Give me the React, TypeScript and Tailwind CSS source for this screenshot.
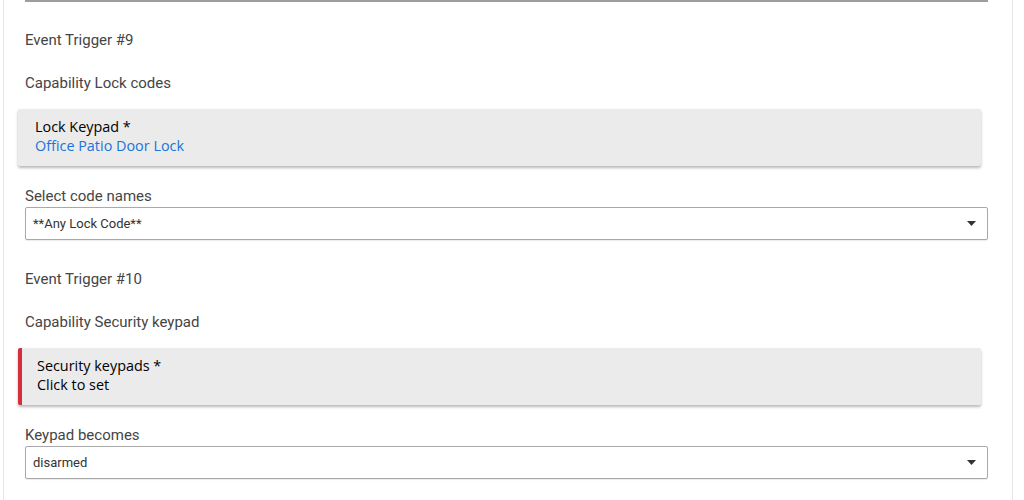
import React from 'react';

const labelCls = "text-[15px] leading-5 text-[#454545]";

const Caret = () => (
    <svg width="9" height="5" viewBox="0 0 9 5" className="shrink-0">
        <path d="M0 0 L9 0 L4.5 5 Z" fill="#333" />
    </svg>
);

const SelectBox: React.FC<{ value: string }> = ({ value }) => (
    <div className="h-[33px] border border-[#a9a9a9] rounded-[2px] bg-white flex items-center justify-between pl-[7px] pr-[11px] shadow-[0_1px_1px_rgba(0,0,0,0.08)]">
        <span className="text-[13px] text-[#333]">{value}</span>
        <Caret />
    </div>
);

const DeviceCard: React.FC<{ title: string; value: string; required?: boolean }> = ({ title, value, required }) => (
    <div
        className={
            "-ml-[7px] mr-[7px] h-[57px] bg-[#ebebeb] rounded-[2px] shadow-[0_2px_3px_rgba(0,0,0,0.28)] flex flex-col pt-[8px] " +
            (required ? "border-l-[4px] border-[#d32f3f] pl-[15px]" : "pl-[17px]")
        }
        style={{ fontFamily: '"Open Sans", "Noto Sans", sans-serif' }}
    >
        <div className="text-[14.4px] leading-[19px] text-black">{title}</div>
        <div className={"text-[14.4px] leading-[19px] " + (required ? "text-black" : "text-[#1a73d9]")}>{value}</div>
    </div>
);

export default function App() {
    return (
        <div className="w-[1024px] h-[500px] bg-white overflow-hidden" style={{ fontFamily: 'Roboto, "Liberation Sans", sans-serif' }}>
            <div className="ml-[3px] w-[1010px] h-full border-l border-r border-[#e6e6e6] pl-[21px] pr-[24px]">
                <div className="h-[2px] bg-[#9e9e9e]"></div>

                <div className={labelCls + " mt-[28px]"}>Event Trigger #9</div>
                <div className={labelCls + " mt-[23px]"}>Capability Lock codes</div>
                <div className="mt-[16px]">
                    <DeviceCard title="Lock Keypad *" value="Office Patio Door Lock" />
                </div>
                <div className={labelCls + " mt-[20px] mb-[1px]"}>Select code names</div>
                <SelectBox value="**Any Lock Code**" />

                <div className={labelCls + " mt-[29px]"}>Event Trigger #10</div>
                <div className={labelCls + " mt-[23px]"}>Capability Security keypad</div>
                <div className="mt-[16px]">
                    <DeviceCard title="Security keypads *" value="Click to set" required />
                </div>
                <div className={labelCls + " mt-[20px] mb-[1px]"}>Keypad becomes</div>
                <SelectBox value="disarmed" />
            </div>
        </div>
    );
}
